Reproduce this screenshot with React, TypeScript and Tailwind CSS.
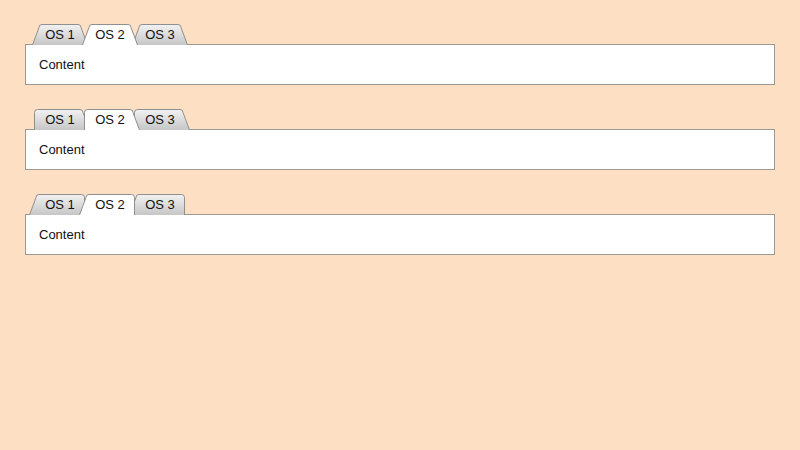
import React, { useId } from "react";

type Slant = "both" | "right" | "left";

const W = 56;
const H = 21;
const S = 7;

function tabPath(slant: Slant, closed: boolean) {
  const l0 = slant === "right" ? 0.5 : 0.5;
  const lt = slant === "right" ? 0.5 : S;
  const rt = slant === "left" ? W - 0.5 : W - S;
  const r0 = W - 0.5;
  const r = 3;
  let d = `M${l0} ${H} L${lt} ${r + 0.5} Q${lt} 0.5 ${lt + r} 0.5 L${rt - r} 0.5 Q${rt} 0.5 ${rt} ${r + 0.5} L${r0} ${H}`;
  if (closed) d += " Z";
  return d;
}

function Tab({ label, slant, active }: { label: string; slant: Slant; active?: boolean }) {
  const id = useId().replace(/:/g, "");
  const shift =
    slant === "right" ? "pr-[4px]" : slant === "left" ? "pl-[6px]" : "";
  return (
    <div className={`relative w-[56px] h-[21px] shrink-0 -ml-[6px] first:ml-0 ${active ? "z-20" : "z-10"}`}>
      <svg className="absolute inset-0" width={W} height={H} viewBox={`0 0 ${W} ${H}`}>
        <defs>
          <linearGradient id={`g${id}`} x1="0" y1="0" x2="0" y2="1">
            <stop offset="0" stopColor="#f2f2f2" />
            <stop offset="1" stopColor="#c6c6c6" />
          </linearGradient>
        </defs>
        <path d={tabPath(slant, true)} fill={active ? "#ffffff" : `url(#g${id})`} />
        <path d={tabPath(slant, false)} fill="none" stroke="#8f8f8f" strokeWidth="1" />
      </svg>
      <span className={`absolute inset-0 flex items-center justify-center pt-px text-[13px] text-[#111] ${shift}`}>
        {label}
      </span>
    </div>
  );
}

function TabBox({ slant, offset }: { slant: Slant; offset: string }) {
  return (
    <div className="flex flex-col">
      <div className={`flex h-[20px] relative z-10 ${offset}`}>
        <Tab label="OS 1" slant={slant} />
        <Tab label="OS 2" slant={slant} active />
        <Tab label="OS 3" slant={slant} />
      </div>
      <div className="h-[41px] bg-white border border-[#9c9893] flex items-center px-[13px] text-[13px] text-[#111]">
        Content
      </div>
    </div>
  );
}

export default function App() {
  return (
    <div
      className="w-[800px] h-[450px] bg-[#fddfc4] flex flex-col gap-[24px] pt-[24px] px-[25px]"
      style={{ fontFamily: '"Liberation Sans", Arial, sans-serif' }}
    >
      <TabBox slant="both" offset="ml-[7px]" />
      <TabBox slant="right" offset="ml-[9px]" />
      <TabBox slant="left" offset="ml-[4px]" />
    </div>
  );
}
